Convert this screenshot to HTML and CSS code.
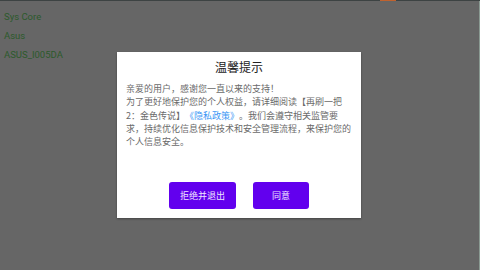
FILE: index.html
```html
<!DOCTYPE html>
<html lang="zh-CN">
<head>
<meta charset="utf-8">
<title>温馨提示</title>
<link rel="stylesheet" href="styles.css">
</head>
<body>
<div class="screen">
  <div class="statusline"><span class="mark"></span></div>
  <ul class="list">
    <li>Sys Core</li>
    <li>Asus</li>
    <li>ASUS_I005DA</li>
  </ul>
  <div class="edge"></div>
</div>
<div class="overlay">
  <div class="dialog">
    <div class="title">温馨提示</div>
    <div class="body">亲爱的用户，感谢您一直以来的支持！<br>为了更好地保护您的个人权益，请详细阅读【再刷一把2：金色传说】<span class="link">《隐私政策》</span>。我们会遵守相关监管要求，持续优化信息保护技术和安全管理流程，来保护您的个人信息安全。</div>
    <div class="actions">
      <button class="btn">拒绝并退出</button>
      <button class="btn">同意</button>
    </div>
  </div>
</div>
</body>
</html>
```
FILE: styles.css
```css
html, body {
  margin: 0;
  padding: 0;
}
body {
  width: 480px;
  height: 270px;
  overflow: hidden;
  background: #666666;
  font-family: Roboto, "Noto Sans CJK SC", sans-serif;
  position: relative;
}
.screen {
  height: 270px;
  position: relative;
}
.statusline {
  height: 1px;
  background: #3d4343;
  display: flex;
}
.mark {
  margin-left: 380px;
  width: 16px;
  height: 1px;
  background: #c0622e;
}
.list {
  list-style: none;
  margin: 0;
  padding: 9px 0 0 4px;
}
.list li {
  height: 19px;
  line-height: 13px;
  font-size: 9.5px;
  font-weight: 400;
  color: #2c5a2c;
}
.edge {
  position: absolute;
  top: 1px;
  right: 0;
  width: 1px;
  height: 269px;
  background: #8a9a92;
}
.overlay {
  position: absolute;
  top: 0;
  left: 0;
  right: 2px;
  bottom: 0;
  display: flex;
  align-items: center;
  justify-content: center;
}
.dialog {
  width: 244px;
  height: 166px;
  box-sizing: border-box;
  background: #ffffff;
  box-shadow: 0 1px 2px rgba(0,0,0,0.35);
  display: flex;
  flex-direction: column;
  padding-top: 7px;
  font-family: "Noto Sans CJK SC", sans-serif;
  text-spacing-trim: space-all;
}
.title {
  text-align: center;
  font-size: 12px;
  line-height: 16px;
  color: #222222;
}
.body {
  margin-top: 7px;
  padding: 0 9px 0 9px;
  font-size: 9px;
  line-height: 13.3px;
  color: #6a6a6a;
  text-spacing-trim: space-all;
}
.link {
  color: #3b97f5;
}
.actions {
  margin-top: auto;
  margin-bottom: 9px;
  display: flex;
  justify-content: center;
  gap: 17px;
}
.btn {
  height: 27px;
  min-width: 56px;
  padding: 0 11px;
  border: none;
  border-radius: 3px;
  background: #6200ee;
  color: #efe6ff;
  font-family: "Noto Sans CJK SC", sans-serif;
  font-size: 9px;
  line-height: 27px;
}
```
